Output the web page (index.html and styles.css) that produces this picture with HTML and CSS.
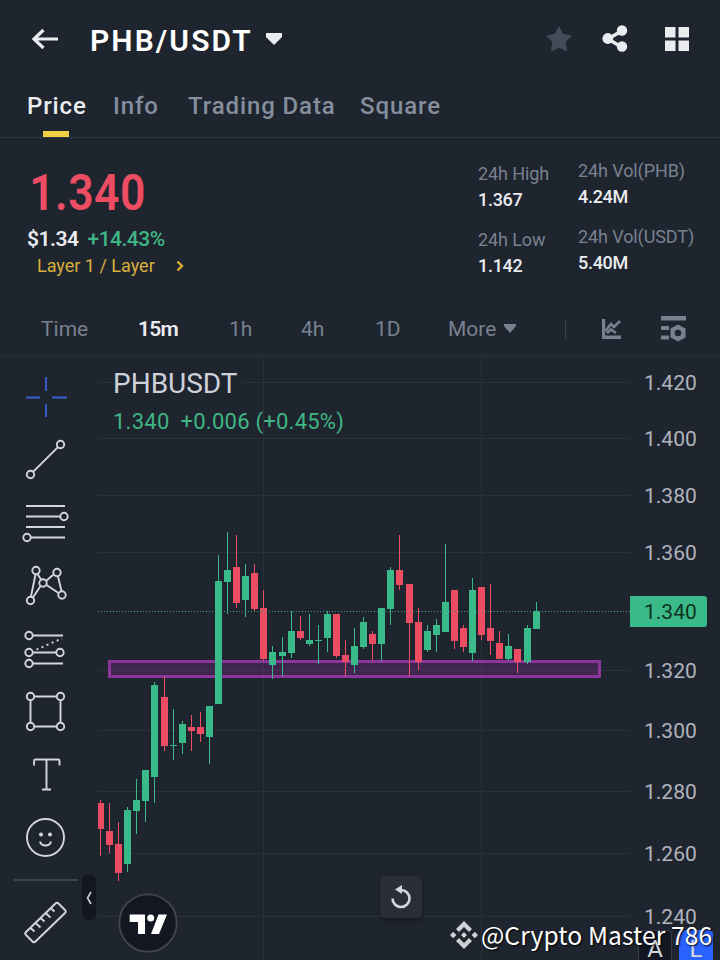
FILE: index.html
```html
<!DOCTYPE html>
<html lang="en">
	<head>
		<meta charset="utf-8" />
		<title>PHB/USDT</title>
		<link rel="stylesheet" href="styles.css">
	</head>
	<body>
		<div id="header">
			<svg class="back" width="28" height="22" viewBox="0 0 28 22"><path d="M12.5 2L3 11L12.5 20M3.5 11H27" /></svg>
			<h1>PHB/USDT</h1>
			<svg class="caret" width="18" height="14" viewBox="0 0 18 14"><path d="M1 1H17V5L9 13L1 5Z" /></svg>
			<div class="actions">
				<svg width="28" height="28" viewBox="0 0 28 28"><path class="star" d="M14 2.5L17.6 9.6L25.6 11L20 16.8L21.2 25.3L14 21.8L6.8 25.3L8 16.8L2.4 11L10.4 9.6Z" /></svg>
				<svg width="28" height="28" viewBox="0 0 28 28"><path class="link" d="M21 5.8L7 14L21 22.2" /><circle cx="21" cy="5.5" r="5.2" /><circle cx="6.8" cy="13.5" r="5.4" /><circle cx="21" cy="21.5" r="5.2" /></svg>
				<svg width="24" height="24" viewBox="0 0 24 24"><path d="M0 0H10.5V10.5H0ZM13.5 0H24V10.5H13.5ZM0 13.5H10.5V24H0ZM13.5 13.5H24V24H13.5Z" /></svg>
			</div>
		</div>

		<ul id="tabs">
			<li class="active">Price</li>
			<li>Info</li>
			<li>Trading Data</li>
			<li>Square</li>
		</ul>

		<div id="quote">
			<div class="price">
				<div class="last">1.340</div>
				<div class="change"><b>$1.34</b><span>+14.43%</span></div>
				<div class="tag">Layer 1 / Layer <svg width="8" height="12" viewBox="0 0 8 12"><path d="M1.5 1.5L6 6L1.5 10.5" /></svg></div>
			</div>
			<dl class="range">
				<dt>24h High</dt>
				<dd>1.367</dd>
				<dt>24h Low</dt>
				<dd>1.142</dd>
			</dl>
			<dl class="volume">
				<dt>24h Vol(PHB)</dt>
				<dd>4.24M</dd>
				<dt>24h Vol(USDT)</dt>
				<dd>5.40M</dd>
			</dl>
		</div>

		<div id="periods">
			<span>Time</span>
			<span class="active">15m</span>
			<span>1h</span>
			<span>4h</span>
			<span>1D</span>
			<span>More <svg width="12" height="9" viewBox="0 0 12 9"><path d="M0 0H12V2L6 9L0 2Z" /></svg></span>
			<i></i>
			<svg width="20" height="20" viewBox="0 0 20 20"><path d="M0 0H3.2V16.5H19V20H0Z" /><path class="trend" d="M3.5 12L9 5L12 8L18 2M5 14L9 10.5L14 14" /></svg>
			<svg class="settings" width="26" height="26" viewBox="0 0 26 26"><path d="M0 0H25V4.5H0ZM0 10H8V14H0ZM0 19.5H8V23.5H0Z" /><path fill-rule="evenodd" d="M17 8.5L24.5 12.5V21.5L17 25.5L9.5 21.5V12.5ZM17 13.7A3.3 3.3 0 1 0 17 20.3A3.3 3.3 0 1 0 17 13.7Z" /></svg>
		</div>

		<div id="board">
			<!-- drawing tools -->
			<div id="tools">
				<svg class="cross" viewBox="0 0 60 60"><path d="M31 10V24M31 37V50M11 30.5H25M37 30.5H52" /></svg>
				<svg viewBox="0 0 60 60"><path d="M18.3 41.7L42.7 17.3" /><circle cx="45.5" cy="14.5" r="3.7" /><circle cx="15.5" cy="44.5" r="3.7" /></svg>
				<svg viewBox="0 0 60 60"><path d="M11 13H50M11 23.5H45M11 34H50M16 44.5H50" /><circle cx="49" cy="23.5" r="3.7" /><circle cx="12" cy="44.5" r="3.7" /></svg>
				<svg viewBox="0 0 60 60"><path d="M22.5 18L26 23.5M20.5 18.5L16 40.5M18 41.5L25.5 30M31 25L38.5 18.5M31.5 29L43.5 37M43 20.5L46.5 35" /><circle cx="21" cy="14.5" r="3.7" /><circle cx="42" cy="16.5" r="3.7" /><circle cx="28" cy="27" r="3.7" /><circle cx="47" cy="39" r="3.7" /><circle cx="15.5" cy="44.5" r="3.7" /></svg>
				<svg viewBox="0 0 60 60"><path d="M18 16.5H48M18 33.5H41M18 44.5H48" /><path class="dots" d="M21.500 30.500L47 19.5" /><circle cx="14" cy="16.5" r="3.7" /><circle cx="14" cy="33.5" r="3.7" /><circle cx="45" cy="33.5" r="3.7" /><circle cx="14" cy="44.5" r="3.7" /></svg>
				<svg viewBox="0 0 60 60"><path d="M19.5 14.5H41.5M19.5 44.5H41.5M15.5 18.5V40.5M45.5 18.5V40.5" /><circle cx="15.5" cy="14.5" r="3.7" /><circle cx="45.5" cy="14.5" r="3.7" /><circle cx="15.5" cy="44.5" r="3.7" /><circle cx="45.5" cy="44.5" r="3.7" /></svg>
				<svg viewBox="0 0 60 60"><path d="M19 20.5V16Q19 14.5 20.5 14.5H43Q44.5 14.5 44.5 16V20.5M31.5 14.5V44.5M27 44.5H36" /></svg>
				<svg viewBox="0 0 60 60"><circle cx="30.5" cy="29.5" r="18.5" /><path d="M25 33.5Q26 37.5 30.5 37.5Q35 37.5 36 33.5" /><circle class="eye" cx="26" cy="26.5" r="2" /><circle class="eye" cx="35" cy="26.5" r="2" /></svg>
				<hr>
				<svg viewBox="0 0 60 60"><path d="M40.5 11.5Q42 10 43.5 11.5L50 18Q51.5 19.5 50 21L20.5 49.5Q19 51 17.5 49.5L11 43Q9.5 41.5 11 40ZM15.5 36L19.5 39.5M20.5 31L25.5 35.5M25.5 26L29.5 29.5M30.5 21L35.5 25.5M35.5 16L39.5 19.5" /></svg>
			</div>
			<div id="fold"><svg width="6" height="14" viewBox="0 0 6 14"><path d="M5 1L1.5 7L5 13" /></svg></div>

			<div id="plot">
				<svg id="chart" width="623" height="602" viewBox="97 358 623 602"></svg>
				<div class="legend">
					<div class="symbol">PHBUSDT</div>
					<div class="values"><span>1.340</span><span>+0.006 (+0.45%)</span></div>
				</div>
				<svg class="tv" width="60" height="60" viewBox="118 893 60 60">
					<circle cx="148" cy="923" r="28.7" />
					<path d="M129.7 914.5H145V934H138V922H129.7ZM158.5 914.5H167L159 934H151Z" />
					<path d="M147.2 918A3.5 3.5 0 1 0 154.2 918A3.5 3.5 0 1 0 147.2 918Z" />
				</svg>
				<div class="reset"><svg width="24" height="24" viewBox="0 0 24 24"><path d="M3.5 13.5A8.5 8.5 0 1 0 12 5" /><path class="head" d="M6 4.5L13 0V9Z" /></svg></div>
				<div class="scale"><span>A</span><span class="on">L</span></div>
				<div class="author">
					<svg width="28" height="28" viewBox="0 0 28 28"><path d="M14 0L22 8L19 11L14 6L9 11L6 8ZM14 28L22 20L19 17L14 22L9 17L6 20ZM14 11L17 14L14 17L11 14ZM3.2 10.8L6.4 14L3.2 17.2L0 14ZM24.8 10.8L28 14L24.8 17.2L21.6 14Z" /></svg>
					<span>@Crypto Master 786</span>
				</div>
			</div>
		</div>

		<script src="chart.js"></script>
	</body>
</html>
```
FILE: styles.css
```css
*{
	padding: 0;
	margin: 0;
	box-sizing: border-box;
}
body{
	width: 720px;
	height: 960px;
	overflow: hidden;
	background-color: #1f252f;
	color: #eaecef;
	font-family: Roboto, "Liberation Sans", sans-serif;
}
ul{
	list-style: none;
}
svg{
	display: block;
	flex: none;
}

/*header*/
#header{
	height: 78px;
	padding: 0 31px;
	display: flex;
	align-items: center;
	fill: #eaecef;
}
#header .back{
	fill: none;
	stroke: #eaecef;
	stroke-width: 3.2;
}
#header h1{
	margin-left: 31px;
	padding-top: 3px;
	width: 175px;
	font-size: 30px;
	font-weight: 600;
	letter-spacing: 2.1px;
	color: #fff;
}
#header .actions{
	margin-left: auto;
	display: flex;
	align-items: center;
}
#header .actions svg + svg{
	margin-left: 28px;
}
#header .actions svg:last-child{
	margin-left: 36px;
}
.star{
	fill: #434c5b;
	stroke: #434c5b;
	stroke-width: 1.5;
	stroke-linejoin: round;
}
.link{
	fill: none;
	stroke: #eaecef;
	stroke-width: 3.5;
}

/*tabs*/
#tabs{
	height: 60px;
	padding-left: 27px;
	display: grid;
	grid-template-columns: 86px 75px 172px auto;
	border-bottom: 1px solid #323842;
	font-size: 24px;
	font-weight: 500;
	line-height: 56px;
	letter-spacing: 0.9px;
	color: #848e9c;
}
#tabs li{
	position: relative;
}
#tabs .active{
	color: #eaecef;
}
#tabs .active::after{
	content: "";
	position: absolute;
	left: 16px;
	bottom: 0;
	width: 26px;
	height: 6px;
	background-color: #f0cf45;
}

/*quote*/
#quote{
	height: 162px;
	padding-left: 27px;
	display: flex;
}
#quote .price{
	width: 451px;
}
#quote .last{
	padding-top: 26px;
	height: 88px;
	line-height: 58px;
	font-size: 50px;
	font-weight: 600;
	letter-spacing: 0.5px;
	color: #ec4d62;
	transform: scaleX(0.89);
	transform-origin: 20px 0;
}
#quote .change{
	display: flex;
	gap: 9px;
	line-height: 26px;
	font-size: 21px;
	letter-spacing: -0.5px;
}
#quote .change b{
	font-weight: 600;
}
#quote .change span{
	font-weight: 500;
	color: #3fb584;
}
#quote .tag{
	padding-left: 10px;
	display: flex;
	align-items: center;
	gap: 21px;
	line-height: 28px;
	font-size: 18px;
	color: #d9af3b;
}
#quote .tag path{
	fill: none;
	stroke: #d9af3b;
	stroke-width: 2.4;
}
#quote dl{
	width: 100px;
	padding-top: 23px;
	font-size: 18px;
	line-height: 26px;
	letter-spacing: -0.1px;
	white-space: nowrap;
}
#quote .volume{
	padding-top: 20px;
}
#quote dt{
	color: #78818f;
}
#quote dd{
	margin-bottom: 14px;
	font-weight: 500;
	letter-spacing: -0.3px;
	color: #eaecef;
}

/*periods*/
#periods{
	height: 58px;
	padding: 3px 0 0 41px;
	display: grid;
	grid-template-columns: 97px 91px 72px 74px 73px 117px 37px 59px 30px;
	align-items: center;
	border-bottom: 4px solid #252b35;
	font-size: 21px;
	color: #78818f;
	fill: #78818f;
}
#periods .active{
	font-weight: 600;
	letter-spacing: -0.8px;
	color: #eaecef;
}
#periods span:nth-child(6){
	display: flex;
	align-items: center;
	gap: 8px;
}
#periods i{
	width: 1px;
	height: 20px;
	background-color: #3a414d;
}
#periods .trend{
	fill: none;
	stroke: #78818f;
	stroke-width: 2.6;
}

/*chart board*/
#board{
	position: relative;
	height: 602px;
	display: flex;
}
#tools{
	width: 97px;
	padding: 8px 0 0 15px;
}
#tools svg{
	width: 60px;
	height: 60px;
	margin-bottom: 3px;
	fill: none;
	stroke: #d3d6dd;
	stroke-width: 1.9;
}
#tools .cross{
	margin-top: 1px;
	stroke: #3a5fd0;
}
#tools .dots{
	stroke-dasharray: 2 3.5;
}
#tools .eye{
	fill: #d3d6dd;
	stroke: none;
}
#tools hr{
	width: 64px;
	height: 2px;
	margin: 11px 0 11px -1px;
	border: 0;
	background-color: #3c424d;
}
#fold{
	position: absolute;
	left: 82px;
	top: 517px;
	width: 14px;
	height: 45px;
	display: flex;
	align-items: center;
	justify-content: center;
	border-radius: 5px;
	background-color: #131722;
	z-index: 1;
}
#fold path{
	fill: none;
	stroke: #c6c9d1;
	stroke-width: 1.7;
}
#plot{
	position: relative;
	width: 623px;
}
#chart .grid{
	stroke: #2b313b;
}
#chart .zone{
	fill: rgba(136, 43, 154, 0.3);
	stroke: #8b359b;
	stroke-width: 3;
}
#chart .up{
	fill: #39ba88;
}
#chart .down{
	fill: #ec4d62;
}
#chart .last{
	stroke: #39a07a;
	stroke-dasharray: 1 2;
}
#chart text{
	font-size: 21px;
	fill: #b0b4bd;
}
#chart .now{
	fill: #10321f;
}

/*things lying over the chart*/
.legend{
	position: absolute;
	left: 16px;
	top: 8px;
}
.legend .symbol{
	width: 130px;
	line-height: 36px;
	font-size: 28px;
	color: #cfd2da;
	background-color: #1f252f;
}
.legend .values{
	display: flex;
	gap: 11px;
	line-height: 40px;
	font-size: 22px;
	letter-spacing: 0.25px;
	color: #3fb584;
}
.tv{
	position: absolute;
	left: 21px;
	top: 535px;
	fill: #fff;
}
.tv circle{
	fill: #131722;
	stroke: #434651;
	stroke-width: 1.8;
}
.reset{
	position: absolute;
	left: 283px;
	top: 518px;
	width: 42px;
	height: 42px;
	display: flex;
	align-items: center;
	justify-content: center;
	border-radius: 5px;
	background-color: #2a2e39;
	box-shadow: 0 2px 4px rgba(0, 0, 0, 0.4);
}
.reset path{
	fill: none;
	stroke: #d3d6dd;
	stroke-width: 2.6;
}
.reset .head{
	fill: #d3d6dd;
	stroke: none;
}
.scale{
	position: absolute;
	left: 541px;
	top: 572px;
	display: flex;
	gap: 7px;
}
.scale span{
	width: 34px;
	height: 36px;
	border: 1px solid #363a45;
	border-radius: 4px;
	background-color: #131722;
	text-align: center;
	line-height: 37px;
	font-size: 24px;
	color: #d3d6dd;
}
.scale .on{
	border-color: #2962ff;
	background-color: #2962ff;
}
.author{
	position: absolute;
	left: 353px;
	top: 561px;
	display: flex;
	align-items: center;
	gap: 3px;
	line-height: 34px;
	font-family: "Noto Sans CJK SC", "Noto Sans", sans-serif;
	font-size: 24.6px;
	letter-spacing: 0.1px;
	white-space: nowrap;
	color: #fff;
	text-shadow: 1px 1px 2px #000;
}
.author svg{
	fill: #d0d1d3;
}
.author span{
	margin-top: -2px;
}
```
FILE: chart.js
```js
var chart = document.getElementById("chart");

//left, high, body top, body bottom, low, up
var candles = [
	[97, 800, 803, 829, 856, 0], [106, 803, 831, 845, 853, 0], [115, 822, 844, 873, 881, 0],
	[124, 807, 810, 864, 872, 1], [133, 779, 800, 811, 834, 1], [142, 770, 770, 801, 822, 1],
	[151, 682, 685, 777, 803, 1], [161, 676, 697, 746, 751, 0], [170, 709, 745, 746, 760, 1],
	[179, 721, 724, 743, 754, 1], [188, 715, 727, 731, 751, 0], [197, 712, 727, 734, 742, 0],
	[206, 706, 706, 737, 764, 1], [215, 555, 581, 704, 704, 1], [224, 532, 570, 582, 614, 1],
	[233, 535, 567, 603, 608, 0], [242, 564, 576, 600, 617, 1], [251, 564, 573, 609, 611, 0],
	[260, 590, 608, 659, 661, 0], [269, 646, 652, 665, 679, 1], [279, 637, 652, 656, 676, 1],
	[288, 611, 631, 653, 658, 1], [297, 616, 631, 638, 640, 0], [306, 614, 640, 644, 646, 1],
	[315, 625, 640, 641, 664, 1], [324, 611, 614, 638, 652, 1], [333, 614, 614, 656, 658, 0],
	[342, 640, 655, 662, 676, 0], [351, 628, 646, 665, 673, 1], [360, 617, 622, 647, 649, 1],
	[369, 631, 634, 644, 661, 0], [378, 608, 608, 644, 661, 1], [387, 567, 570, 609, 625, 1],
	[396, 535, 570, 585, 590, 0], [406, 584, 584, 623, 676, 0], [415, 608, 622, 662, 670, 0],
	[424, 625, 631, 650, 652, 1], [433, 619, 625, 635, 652, 1], [442, 544, 602, 632, 632, 1],
	[451, 590, 590, 641, 649, 0], [460, 625, 628, 647, 652, 0], [469, 578, 590, 653, 661, 1],
	[478, 587, 587, 635, 640, 0], [487, 584, 628, 641, 655, 0], [496, 631, 643, 659, 659, 0],
	[505, 634, 646, 659, 661, 1], [514, 649, 649, 662, 673, 0], [524, 625, 628, 662, 664, 1],
	[533, 602, 611, 629, 629, 1]
];

//label: y of its grid line
var prices = {
	"1.420": 382, "1.400": 438, "1.380": 495, "1.360": 552, "1.320": 670,
	"1.300": 730, "1.280": 791, "1.260": 853, "1.240": 916
};

var html = "";
for(var label in prices){
	var y = prices[label];
	html += '<path class="grid" d="M98 ' + (y + 0.5) + 'H630" />';
	html += '<text x="644" y="' + (y + 8) + '">' + label + '</text>';
}
html += '<path class="grid" d="M263.5 358V960M481.5 358V960" />';
html += '<rect class="zone" x="109.5" y="661.5" width="490" height="15" />';

for(var i = 0; i < candles.length; i++){
	var c = candles[i];
	html += '<g class="' + (c[5] ? "up" : "down") + '">';
	html += '<rect x="' + (c[0] + 3) + '" y="' + c[1] + '" width="1" height="' + (c[4] - c[1]) + '" />';
	//the first candle is cut by the edge of the plot
	var x = Math.max(c[0], 98);
	html += '<rect x="' + x + '" y="' + c[2] + '" width="' + (c[0] + 7 - x) + '" height="' + (c[3] - c[2]) + '" />';
	html += '</g>';
}

//current price
html += '<path class="last" d="M98 611.5H631" />';
html += '<path class="up" d="M630 596H704Q707 596 707 599V624Q707 627 704 627H630Z" />';
html += '<text class="now" x="644" y="619">1.340</text>';

chart.innerHTML = html;
```
